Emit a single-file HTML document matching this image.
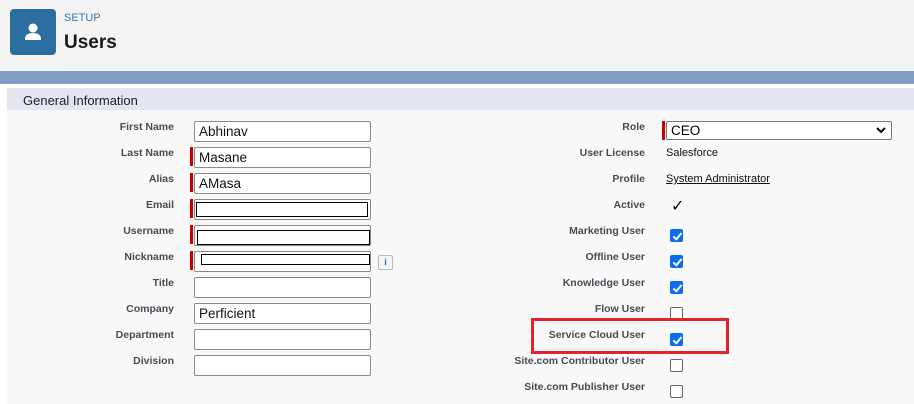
<!DOCTYPE html><html><head><style>
body{margin:0;width:914px;height:404px;position:relative;overflow:hidden;background:#fff;font-family:"Liberation Sans",Arial,sans-serif}
.a{position:absolute}
.lbl{position:absolute;font-size:10.5px;font-weight:bold;color:#4a4a56;text-align:right}
.in{position:absolute;left:194px;width:175px;height:19px;border:1px solid #8a8a8a;border-radius:2px;background:#fff;font-size:13.5px;line-height:19px;padding-left:4px;box-sizing:border-box;width:177px;height:21px;color:#111}
.req{position:absolute;left:190px;width:3px;height:19px;background:#c00}
.cb{position:absolute;left:670px;width:13px;height:13px;border:1px solid #666;border-radius:2px;background:#fff;box-sizing:border-box}
.cb.on{background:#0b6cf0;border-color:#0b6cf0}
.cb.on:after{content:"";position:absolute;left:3.5px;top:0.5px;width:3px;height:7px;border:solid #fff;border-width:0 2px 2px 0;transform:rotate(40deg)}
</style></head><body>
<div class="a" style="left:0;top:0;width:914px;height:71px;background:#f3f3f3"></div>
<div class="a" style="left:10px;top:9px;width:46px;height:46px;border-radius:4px;background:#2a6f9f"></div>
<svg class="a" style="left:22px;top:21px" width="22" height="22" viewBox="0 0 22 22"><circle cx="11" cy="7" r="4.5" fill="#fff"/><path d="M3 18c0-4 3-6 8-6s8 2 8 6v1H3z" fill="#fff"/></svg>
<div class="a" style="left:64px;top:12px;font-size:11px;color:#3a76a8">SETUP</div>
<div class="a" style="left:64px;top:32px;font-size:19px;font-weight:bold;color:#1a1a1a">Users</div>
<div class="a" style="left:0;top:71px;width:914px;height:13px;background:#809ec2"></div>
<div class="a" style="left:7px;top:88px;width:907px;height:316px;background:#f8f8f8"></div>
<div class="a" style="left:7px;top:88px;width:907px;height:22px;background:#e3e6ee"></div>
<div class="a" style="left:23px;top:93px;font-size:13px;color:#222">General Information</div>

<div class="lbl" style="right:740px;top:121px">First Name</div>
<div class="lbl" style="right:740px;top:147px">Last Name</div>
<div class="lbl" style="right:740px;top:173px">Alias</div>
<div class="lbl" style="right:740px;top:199px">Email</div>
<div class="lbl" style="right:740px;top:225px">Username</div>
<div class="lbl" style="right:740px;top:251px">Nickname</div>
<div class="lbl" style="right:740px;top:277px">Title</div>
<div class="lbl" style="right:740px;top:303px">Company</div>
<div class="lbl" style="right:740px;top:329px">Department</div>
<div class="lbl" style="right:740px;top:355px">Division</div>

<div class="in" style="top:121px">Abhinav</div>
<div class="req" style="top:147px"></div><div class="in" style="top:147px">Masane</div>
<div class="req" style="top:173px"></div><div class="in" style="top:173px">AMasa</div>
<div class="req" style="top:199px"></div><div class="in" style="top:199px"><div class="a" style="left:1px;top:2px;width:172px;height:15px;border:1px solid #000;box-sizing:border-box"></div></div>
<div class="req" style="top:225px"></div><div class="in" style="top:225px"><div class="a" style="left:2px;top:4px;width:173px;height:15px;border:1px solid #000;box-sizing:border-box"></div></div>
<div class="req" style="top:251px"></div><div class="in" style="top:251px"><div class="a" style="left:6px;top:2px;width:169px;height:11px;border:1px solid #000;box-sizing:border-box"></div></div>
<div class="a" style="left:378px;top:255px;width:13px;height:13px;border:1px solid #bbb;border-radius:2px;background:#f4f6f9;font-size:9px;font-weight:bold;color:#1a6fc0;text-align:center;line-height:13px">i</div>
<div class="in" style="top:277px"></div>
<div class="in" style="top:303px">Perficient</div>
<div class="in" style="top:329px"></div>
<div class="in" style="top:355px"></div>

<div class="lbl" style="right:269px;top:121px">Role</div>
<div class="lbl" style="right:269px;top:147px">User License</div>
<div class="lbl" style="right:269px;top:173px">Profile</div>
<div class="lbl" style="right:269px;top:199px">Active</div>
<div class="lbl" style="right:269px;top:225px">Marketing User</div>
<div class="lbl" style="right:269px;top:251px">Offline User</div>
<div class="lbl" style="right:269px;top:277px">Knowledge User</div>
<div class="lbl" style="right:269px;top:303px">Flow User</div>
<div class="lbl" style="right:269px;top:329px">Service Cloud User</div>
<div class="lbl" style="right:269px;top:355px">Site.com Contributor User</div>
<div class="lbl" style="right:269px;top:381px">Site.com Publisher User</div>

<div class="a" style="left:662px;top:121px;width:3px;height:19px;background:#c00"></div>
<div class="a" style="left:666px;top:121px;width:226px;height:19px;border:1px solid #777;border-radius:2px;background:#fff;box-sizing:border-box;font-size:13.5px;line-height:17px;padding-left:4px">CEO<svg class="a" style="right:5px;top:5px" width="10" height="7" viewBox="0 0 10 7"><path d="M1 1l4 4 4-4" stroke="#000" stroke-width="2" fill="none"/></svg></div>
<div class="a" style="left:666px;top:147px;font-size:11px;color:#111">Salesforce</div>
<div class="a" style="left:666px;top:173px;font-size:11px;color:#111;text-decoration:underline">System Administrator</div>
<div class="a" style="left:671px;top:196px;font-size:16px;color:#000">✓</div>
<div class="cb on" style="top:229px"></div>
<div class="cb on" style="top:255px"></div>
<div class="cb on" style="top:281px"></div>
<div class="cb" style="top:307px"></div>
<div class="cb on" style="top:333px"></div>
<div class="cb" style="top:359px"></div>
<div class="cb" style="top:385px"></div>
<div class="a" style="left:531px;top:318px;width:198px;height:36px;border:3px solid #e8202a;box-sizing:border-box"></div>
</body></html>
